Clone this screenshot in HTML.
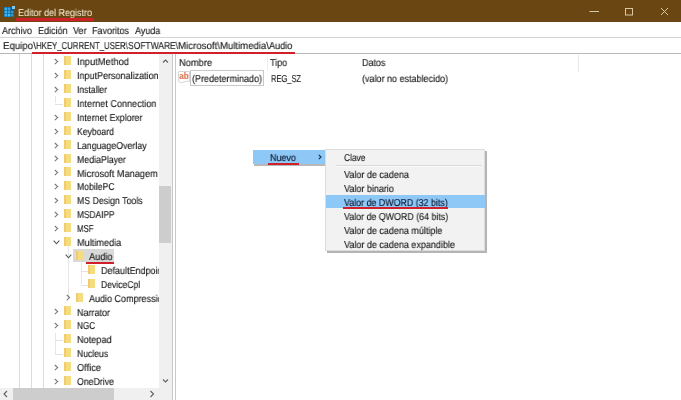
<!DOCTYPE html>
<html><head><meta charset="utf-8">
<style>
*{margin:0;padding:0;box-sizing:border-box}
html,body{width:681px;height:400px;overflow:hidden;background:#fff;font-family:"Liberation Sans",sans-serif;font-size:9px;color:#222;position:relative}
.a{position:absolute;display:block}
.ln{position:absolute;background:#c8c8c8}
.red{position:absolute;background:#d0202a}
.t{position:absolute;white-space:nowrap;line-height:1;-webkit-text-stroke:0.15px currentColor;will-change:transform;font-size:var(--fs);transform:scaleX(calc(var(--s,1)*var(--g)));transform-origin:0 0;margin-top:var(--dy)}
:root{--fs:10px;--g:0.9;--dy:0px}
.t{text-rendering:geometricPrecision}
.tl{position:absolute;background:#dcdcdc}
.fold{position:absolute;display:block;width:6.5px;height:9px;background:linear-gradient(90deg,#f3cb6c 0,#f3cb6c 33%,#f4dc80 33%,#f4dc80 100%)}
#tree{position:absolute;left:0;top:54px;width:159px;height:334px;overflow:hidden}
#tree .inner{position:absolute;left:0;top:-54px;width:681px;height:400px}
</style></head><body>
<!-- title bar -->
<div class="a" style="left:0;top:0;width:681px;height:22px;background:#694612"></div>
<svg class="a" style="left:3px;top:5px" width="14" height="14" viewBox="0 0 14 14">
<rect x="1" y="2" width="10" height="10" fill="#0d5c94"/>
<rect x="1.5" y="2.5" width="2.6" height="2.6" fill="#3cb4ee"/><rect x="4.7" y="2.5" width="2.6" height="2.6" fill="#2fa6e2"/>
<rect x="1.5" y="5.7" width="2.6" height="2.6" fill="#3cb4ee"/><rect x="4.7" y="5.7" width="2.6" height="2.6" fill="#2fa6e2"/><rect x="7.9" y="5.7" width="2.6" height="2.6" fill="#2a9ad6"/>
<rect x="1.5" y="8.9" width="2.6" height="2.6" fill="#3cb4ee"/><rect x="4.7" y="8.9" width="2.6" height="2.6" fill="#44c0f2"/><rect x="7.9" y="8.9" width="2.6" height="2.6" fill="#2a9ad6"/>
<rect x="9" y="1" width="3" height="3" fill="#7cc8ee"/>
</svg>
<div class="t" style="left:18px;top:8.5px;color:#f4e8d0;-webkit-text-stroke:0.05px currentColor">Editor del Registro</div>
<div class="red" style="left:16px;top:18px;width:78px;height:3px"></div>
<svg class="a" style="left:585px;top:4px" width="90" height="14" viewBox="0 0 90 14">
<path d="M4.5 7.5 H14" stroke="#d9c8a2" stroke-width="1"/>
<rect x="40.5" y="4.5" width="7" height="6.5" fill="none" stroke="#d9c8a2" stroke-width="1"/>
<path d="M76 4 L83 11 M83 4 L76 11" stroke="#d9c8a2" stroke-width="1"/>
</svg>
<!-- menubar -->
<div class="t" style="left:2px;top:26.6px">Archivo</div>
<div class="t" style="left:38px;top:26.6px">Edición</div>
<div class="t" style="left:73px;top:26.6px">Ver</div>
<div class="t" style="left:92px;top:26.6px">Favoritos</div>
<div class="t" style="left:135px;top:26.6px">Ayuda</div>
<div class="ln" style="left:0;top:37px;width:681px;height:1px;background:#d4d4d4"></div>
<!-- address -->
<div class="t" style="left:3.2px;top:42px;--s:1.075">Equipo\</div>
<div class="t" style="left:35.7px;top:42px;--s:0.866">HKEY_CURRENT_USER\</div>
<div class="t" style="left:127.5px;top:42px;--s:0.942">SOFTWARE\</div>
<div class="t" style="left:177.6px;top:42px;--s:1.074">Microsoft\</div>
<div class="t" style="left:219.5px;top:42px;--s:1.065">Multimedia\</div>
<div class="t" style="left:268.5px;top:42px;--s:1.013">Audio</div>
<div class="ln" style="left:0;top:53px;width:681px;height:1px;background:#b8b8b8"></div>
<div class="red" style="left:32px;top:52px;width:263px;height:2px"></div>

<!-- tree pane -->
<div id="tree"><div class="inner">
<div class="tl" style="left:19px;top:54px;width:1px;height:334px"></div>
<div class="tl" style="left:31px;top:54px;width:1px;height:334px"></div>
<div class="tl" style="left:43px;top:54px;width:1px;height:334px"></div>
<div class="tl" style="left:55px;top:96px;width:1px;height:7px;background:#e6e6e6"></div>
<div class="tl" style="left:55px;top:333px;width:1px;height:22px;background:#e6e6e6"></div>
<div class="tl" style="left:68px;top:245px;width:1px;height:53px;background:#e6e6e6"></div>
<div class="tl" style="left:81px;top:262px;width:1px;height:22px;background:#e6e6e6"></div>
<div class="a" style="left:73px;top:249px;width:41px;height:13px;background:#d9d9d9"></div>
<svg class="a" style="left:54px;top:58.10px" width="5" height="7" viewBox="0 0 5 7"><path d="M0.8 1 L3.6 3.6 L0.8 6.2" fill="none" stroke="#7a7a7a" stroke-width="1.15"/></svg>
<i class="fold" style="left:64px;top:56.20px"></i>
<div class="t tr" style="left:77px;top:58.30px;--s:1.038">InputMethod</div>
<svg class="a" style="left:54px;top:72.00px" width="5" height="7" viewBox="0 0 5 7"><path d="M0.8 1 L3.6 3.6 L0.8 6.2" fill="none" stroke="#7a7a7a" stroke-width="1.15"/></svg>
<i class="fold" style="left:64px;top:70.10px"></i>
<div class="t tr" style="left:77px;top:72.20px;--s:1.0">InputPersonalization</div>
<svg class="a" style="left:54px;top:85.90px" width="5" height="7" viewBox="0 0 5 7"><path d="M0.8 1 L3.6 3.6 L0.8 6.2" fill="none" stroke="#7a7a7a" stroke-width="1.15"/></svg>
<i class="fold" style="left:64px;top:84.00px"></i>
<div class="t tr" style="left:77px;top:86.10px;--s:0.953">Installer</div>
<div class="tl" style="left:55px;top:103.80px;width:8px;height:1px;background:#e2e2e2"></div>
<i class="fold" style="left:64px;top:97.90px"></i>
<div class="t tr" style="left:77px;top:100.00px;--s:1.01">Internet Connection</div>
<svg class="a" style="left:54px;top:113.70px" width="5" height="7" viewBox="0 0 5 7"><path d="M0.8 1 L3.6 3.6 L0.8 6.2" fill="none" stroke="#7a7a7a" stroke-width="1.15"/></svg>
<i class="fold" style="left:64px;top:111.80px"></i>
<div class="t tr" style="left:77px;top:113.90px;--s:0.982">Internet Explorer</div>
<svg class="a" style="left:54px;top:127.60px" width="5" height="7" viewBox="0 0 5 7"><path d="M0.8 1 L3.6 3.6 L0.8 6.2" fill="none" stroke="#7a7a7a" stroke-width="1.15"/></svg>
<i class="fold" style="left:64px;top:125.70px"></i>
<div class="t tr" style="left:77px;top:127.80px;--s:0.958">Keyboard</div>
<svg class="a" style="left:54px;top:141.50px" width="5" height="7" viewBox="0 0 5 7"><path d="M0.8 1 L3.6 3.6 L0.8 6.2" fill="none" stroke="#7a7a7a" stroke-width="1.15"/></svg>
<i class="fold" style="left:64px;top:139.60px"></i>
<div class="t tr" style="left:77px;top:141.70px;--s:0.979">LanguageOverlay</div>
<svg class="a" style="left:54px;top:155.40px" width="5" height="7" viewBox="0 0 5 7"><path d="M0.8 1 L3.6 3.6 L0.8 6.2" fill="none" stroke="#7a7a7a" stroke-width="1.15"/></svg>
<i class="fold" style="left:64px;top:153.50px"></i>
<div class="t tr" style="left:77px;top:155.60px;--s:0.975">MediaPlayer</div>
<svg class="a" style="left:54px;top:169.30px" width="5" height="7" viewBox="0 0 5 7"><path d="M0.8 1 L3.6 3.6 L0.8 6.2" fill="none" stroke="#7a7a7a" stroke-width="1.15"/></svg>
<i class="fold" style="left:64px;top:167.40px"></i>
<div class="t tr" style="left:77px;top:169.50px;--s:1.022">Microsoft Managem</div>
<svg class="a" style="left:54px;top:183.20px" width="5" height="7" viewBox="0 0 5 7"><path d="M0.8 1 L3.6 3.6 L0.8 6.2" fill="none" stroke="#7a7a7a" stroke-width="1.15"/></svg>
<i class="fold" style="left:64px;top:181.30px"></i>
<div class="t tr" style="left:77px;top:183.40px;--s:0.962">MobilePC</div>
<svg class="a" style="left:54px;top:197.10px" width="5" height="7" viewBox="0 0 5 7"><path d="M0.8 1 L3.6 3.6 L0.8 6.2" fill="none" stroke="#7a7a7a" stroke-width="1.15"/></svg>
<i class="fold" style="left:64px;top:195.20px"></i>
<div class="t tr" style="left:77px;top:197.30px;--s:0.974">MS Design Tools</div>
<svg class="a" style="left:54px;top:211.00px" width="5" height="7" viewBox="0 0 5 7"><path d="M0.8 1 L3.6 3.6 L0.8 6.2" fill="none" stroke="#7a7a7a" stroke-width="1.15"/></svg>
<i class="fold" style="left:64px;top:209.10px"></i>
<div class="t tr" style="left:77px;top:211.20px;--s:0.925">MSDAIPP</div>
<svg class="a" style="left:54px;top:224.90px" width="5" height="7" viewBox="0 0 5 7"><path d="M0.8 1 L3.6 3.6 L0.8 6.2" fill="none" stroke="#7a7a7a" stroke-width="1.15"/></svg>
<i class="fold" style="left:64px;top:223.00px"></i>
<div class="t tr" style="left:77px;top:225.10px;--s:0.868">MSF</div>
<svg class="a" style="left:53px;top:240.30px" width="7" height="5" viewBox="0 0 7 5"><path d="M0.7 0.7 L3.5 3.8 L6.3 0.7" fill="none" stroke="#555" stroke-width="1.1"/></svg>
<i class="fold" style="left:64px;top:236.90px"></i>
<div class="t tr" style="left:77px;top:239.00px;--s:1.018">Multimedia</div>
<svg class="a" style="left:65px;top:254.20px" width="7" height="5" viewBox="0 0 7 5"><path d="M0.7 0.7 L3.5 3.8 L6.3 0.7" fill="none" stroke="#555" stroke-width="1.1"/></svg>
<i class="fold" style="left:76px;top:250.80px"></i>
<div class="t tr" style="left:89px;top:252.90px;--s:1.026">Audio</div>
<div class="tl" style="left:81px;top:270.60px;width:7px;height:1px;background:#e2e2e2"></div>
<i class="fold" style="left:88px;top:264.70px"></i>
<div class="t tr" style="left:101px;top:266.80px;--s:1.0">DefaultEndpoints</div>
<div class="tl" style="left:81px;top:284.50px;width:7px;height:1px;background:#e2e2e2"></div>
<i class="fold" style="left:88px;top:278.60px"></i>
<div class="t tr" style="left:101px;top:280.70px;--s:0.956">DeviceCpl</div>
<svg class="a" style="left:66px;top:294.40px" width="5" height="7" viewBox="0 0 5 7"><path d="M0.8 1 L3.6 3.6 L0.8 6.2" fill="none" stroke="#7a7a7a" stroke-width="1.15"/></svg>
<i class="fold" style="left:76px;top:292.50px"></i>
<div class="t tr" style="left:89px;top:294.60px;--s:1.0">Audio Compression Manager</div>
<svg class="a" style="left:54px;top:308.30px" width="5" height="7" viewBox="0 0 5 7"><path d="M0.8 1 L3.6 3.6 L0.8 6.2" fill="none" stroke="#7a7a7a" stroke-width="1.15"/></svg>
<i class="fold" style="left:64px;top:306.40px"></i>
<div class="t tr" style="left:77px;top:308.50px;--s:1.0">Narrator</div>
<svg class="a" style="left:54px;top:322.20px" width="5" height="7" viewBox="0 0 5 7"><path d="M0.8 1 L3.6 3.6 L0.8 6.2" fill="none" stroke="#7a7a7a" stroke-width="1.15"/></svg>
<i class="fold" style="left:64px;top:320.30px"></i>
<div class="t tr" style="left:77px;top:322.40px;--s:0.91">NGC</div>
<div class="tl" style="left:55px;top:340.10px;width:8px;height:1px;background:#e2e2e2"></div>
<i class="fold" style="left:64px;top:334.20px"></i>
<div class="t tr" style="left:77px;top:336.30px;--s:1.018">Notepad</div>
<div class="tl" style="left:55px;top:354.00px;width:8px;height:1px;background:#e2e2e2"></div>
<i class="fold" style="left:64px;top:348.10px"></i>
<div class="t tr" style="left:77px;top:350.20px;--s:0.958">Nucleus</div>
<svg class="a" style="left:54px;top:363.90px" width="5" height="7" viewBox="0 0 5 7"><path d="M0.8 1 L3.6 3.6 L0.8 6.2" fill="none" stroke="#7a7a7a" stroke-width="1.15"/></svg>
<i class="fold" style="left:64px;top:362.00px"></i>
<div class="t tr" style="left:77px;top:364.10px;--s:1.022">Office</div>
<svg class="a" style="left:54px;top:377.80px" width="5" height="7" viewBox="0 0 5 7"><path d="M0.8 1 L3.6 3.6 L0.8 6.2" fill="none" stroke="#7a7a7a" stroke-width="1.15"/></svg>
<i class="fold" style="left:64px;top:375.90px"></i>
<div class="t tr" style="left:77px;top:378.00px;--s:0.971">OneDrive</div>
<div class="red" style="left:86px;top:262px;width:28px;height:2px"></div>
</div></div>
<!-- vertical scrollbar -->
<div class="a" style="left:159px;top:54px;width:13px;height:346px;background:#f0f0f0"></div>
<div class="a" style="left:159px;top:186px;width:12px;height:57px;background:#cdcdcd"></div>
<svg class="a" style="left:159px;top:54px" width="13" height="346" viewBox="0 0 13 346">
<path d="M4 8.5 L6.5 6 L9 8.5" fill="none" stroke="#606060" stroke-width="1.1"/>
<path d="M4 325.5 L6.5 328 L9 325.5" fill="none" stroke="#606060" stroke-width="1.1"/>
</svg>
<!-- horizontal scrollbar -->
<div class="a" style="left:0;top:388px;width:159px;height:12px;background:#f0f0f0"></div>
<div class="a" style="left:13px;top:388px;width:101px;height:12px;background:#cdcdcd"></div>
<svg class="a" style="left:0;top:388px" width="159" height="12" viewBox="0 0 159 12">
<path d="M7 3 L4 6 L7 9" fill="none" stroke="#606060" stroke-width="1.1"/>
<path d="M150.5 3 L153.5 6 L150.5 9" fill="none" stroke="#606060" stroke-width="1.1"/>
</svg>
<!-- splitter -->
<div class="a" style="left:172px;top:54px;width:1px;height:346px;background:#c8c8c8"></div>
<div class="a" style="left:175px;top:54px;width:1px;height:346px;background:#c8c8c8"></div>

<!-- list pane -->
<div class="t" style="left:179px;top:59px;--s:1.035">Nombre</div>
<div class="t" style="left:270px;top:59px">Tipo</div>
<div class="t" style="left:362px;top:59px">Datos</div>
<svg class="a" style="left:177px;top:70px" width="14" height="15" viewBox="0 0 14 15">
<path d="M1.5 1.5 H12.5 V11.5 Q10 10.5 7 12 Q4 13.5 1.5 11.5 Z" fill="#fff" stroke="#d6d6d6" stroke-width="1"/>
<text x="2.2" y="9.3" font-family="Liberation Sans" font-size="8.2" font-weight="bold" fill="#dc7a58" stroke="#dc7a58" stroke-width="0.15">ab</text>
</svg>
<div class="a" style="left:267px;top:57px;width:1px;height:13px;background:#ececec"></div>
<div class="a" style="left:578px;top:55px;width:1px;height:17px;background:#e6e6e6"></div>
<div class="a" style="left:190px;top:70px;width:74px;height:16px;border:1px solid #c8c8c8;background:#fff"></div>
<div class="t" style="left:192px;top:74.5px">(Predeterminado)</div>
<div class="t" style="left:271px;top:74.5px;--s:0.83">REG_SZ</div>
<div class="t" style="left:362px;top:74.5px">(valor no establecido)</div>

<!-- context menu -->
<div class="a" style="left:253px;top:150px;width:72px;height:14px;background:#8dc8f6"></div>
<div class="a" style="left:254px;top:164px;width:71px;height:2px;background:#b8b8b8;filter:blur(0.5px)"></div>
<div class="t" style="left:270px;top:154px;color:#101830">Nuevo</div>
<svg class="a" style="left:317px;top:154px" width="6" height="6" viewBox="0 0 6 6"><path d="M1.8 0.8 L4 3 L1.8 5.2" fill="none" stroke="#1c2c48" stroke-width="1.1"/></svg>
<div class="red" style="left:268px;top:163px;width:31px;height:2px"></div>

<div class="a" style="left:327px;top:151px;width:160px;height:102px;background:#b4b4b4;filter:blur(0.6px)"></div>
<div class="a" style="left:325px;top:149px;width:160px;height:102px;background:#f2f2f2;border:1px solid #dcdcdc"></div>
<div class="a" style="left:336px;top:165px;width:146px;height:1px;background:#d9d9d9"></div>
<div class="a" style="left:336px;top:166px;width:146px;height:1px;background:#fafafa"></div>
<div class="a" style="left:326px;top:195px;width:159px;height:13px;background:#8dc8f6"></div>
<div class="t" style="left:344px;top:154px;--s:0.93">Clave</div>
<div class="t" style="left:344px;top:171px">Valor de cadena</div>
<div class="t" style="left:344px;top:185px">Valor binario</div>
<div class="t" style="left:344px;top:199px;color:#101830;--s:0.984">Valor de DWORD (32 bits)</div>
<div class="t" style="left:344px;top:213px;--s:0.984">Valor de QWORD (64 bits)</div>
<div class="t" style="left:344px;top:227px">Valor de cadena múltiple</div>
<div class="t" style="left:344px;top:241px">Valor de cadena expandible</div>
<div class="red" style="left:343px;top:207px;width:105px;height:2px"></div>
</body></html>
